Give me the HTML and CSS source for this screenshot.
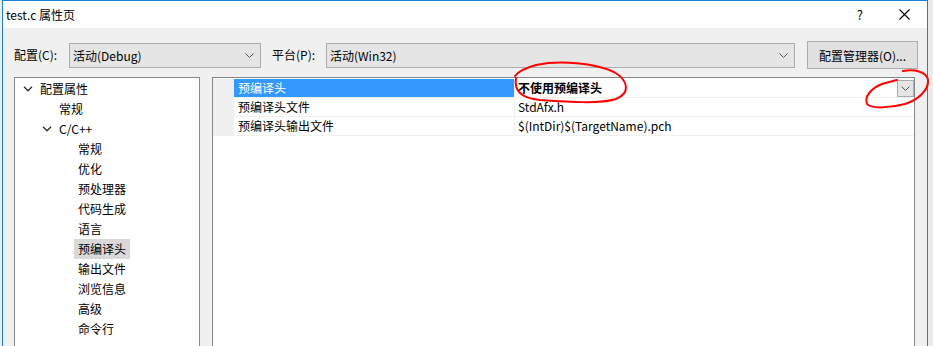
FILE: index.html
```html
<!DOCTYPE html>
<html lang="zh-CN">
<head>
  <meta charset="UTF-8" />
  <meta name="viewport" content="width=device-width, initial-scale=1.0"/>
  <title>test.c 属性页</title>
  <link rel="stylesheet" href="styles.css">
</head>
<body>
  <div class="window">
    <div class="titlebar">
      <span class="title">test.c 属性页</span>
      <span class="help">?</span>
      <svg class="close" width="11" height="11" viewBox="0 0 11 11"><path d="M0.5 0.5 L10.5 10.5 M10.5 0.5 L0.5 10.5" stroke="#000" stroke-width="1.1" fill="none"/></svg>
    </div>

    <div class="content">
      <div class="toolbar">
        <label class="lbl lbl-config">配置(C):</label>
        <div class="combo combo-config">
          <span>活动(Debug)</span>
          <svg width="9" height="6" viewBox="0 0 9 6"><polyline points="0.5,0.5 4.5,4.5 8.5,0.5" stroke="#555" fill="none"/></svg>
        </div>
        <label class="lbl lbl-platform">平台(P):</label>
        <div class="combo combo-platform">
          <span>活动(Win32)</span>
          <svg width="9" height="6" viewBox="0 0 9 6"><polyline points="0.5,0.5 4.5,4.5 8.5,0.5" stroke="#555" fill="none"/></svg>
        </div>
        <button class="btn">配置管理器(O)...</button>
      </div>

      <div class="panels">
        <div class="tree">
          <div class="node lvl0"><span class="toggle"><svg width="10" height="6" viewBox="0 0 10 6"><polyline points="1,0.8 5,4.8 9,0.8" stroke="#333" stroke-width="1.4" fill="none"/></svg></span><span class="text">配置属性</span></div>
          <div class="node lvl1"><span class="toggle"></span><span class="text">常规</span></div>
          <div class="node lvl1"><span class="toggle"><svg width="10" height="6" viewBox="0 0 10 6"><polyline points="1,0.8 5,4.8 9,0.8" stroke="#333" stroke-width="1.4" fill="none"/></svg></span><span class="text">C/C++</span></div>
          <div class="node lvl2"><span class="toggle"></span><span class="text">常规</span></div>
          <div class="node lvl2"><span class="toggle"></span><span class="text">优化</span></div>
          <div class="node lvl2"><span class="toggle"></span><span class="text">预处理器</span></div>
          <div class="node lvl2"><span class="toggle"></span><span class="text">代码生成</span></div>
          <div class="node lvl2"><span class="toggle"></span><span class="text">语言</span></div>
          <div class="node lvl2 selected"><span class="toggle"></span><span class="text">预编译头</span></div>
          <div class="node lvl2"><span class="toggle"></span><span class="text">输出文件</span></div>
          <div class="node lvl2"><span class="toggle"></span><span class="text">浏览信息</span></div>
          <div class="node lvl2"><span class="toggle"></span><span class="text">高级</span></div>
          <div class="node lvl2"><span class="toggle"></span><span class="text">命令行</span></div>
        </div>

        <div class="grid">
          <div class="prop active">
            <div class="gutter"></div>
            <div class="name">预编译头</div>
            <div class="value">
              <strong>不使用预编译头</strong>
              <span class="drop"><svg width="9" height="6" viewBox="0 0 9 6"><polyline points="0.5,0.5 4.5,4.5 8.5,0.5" stroke="#555" fill="none"/></svg></span>
            </div>
          </div>
          <div class="prop">
            <div class="gutter"></div>
            <div class="name">预编译头文件</div>
            <div class="value">StdAfx.h</div>
          </div>
          <div class="prop">
            <div class="gutter"></div>
            <div class="name">预编译头输出文件</div>
            <div class="value">$(IntDir)$(TargetName).pch</div>
          </div>
        </div>
      </div>
    </div>
  </div>

  <!-- hand drawn marks -->
  <svg class="marks" width="933" height="346" viewBox="0 0 933 346">
    <path d="M516 78 C 514 90, 520 98, 540 100 C 570 102, 600 104, 616 99 C 631 93, 628 80, 614 72 C 595 63, 560 60, 536 65 C 525 68, 518 72, 515 76" stroke="#f00" stroke-width="2" fill="none" stroke-linecap="round"/>
    <path d="M903 71 C 915 69, 927 72, 928 80 C 929 90, 918 100, 905 104 C 890 108, 871 109, 867 104 C 864 96, 872 88, 882 84 C 888 82, 893 81, 897 80" stroke="#f00" stroke-width="2" fill="none" stroke-linecap="round"/>
  </svg>
</body>
</html>
```

FILE: styles.css
```css
body {
  margin: 0;
  background: #ececec;
  font-family: "Noto Sans CJK SC", "Noto Sans", sans-serif;
  font-size: 12px;
  color: #000;
  position: relative;
  overflow: hidden;
  width: 933px;
  height: 346px;
}
.window {
  margin-left: 2px;
  width: 924px;
  height: 360px;
  border: 1px solid #1883d7;
  border-bottom: none;
  background: #f0f0f0;
  overflow: hidden;
}
.titlebar {
  height: 27px;
  background: #fff;
  display: flex;
  align-items: center;
  padding-left: 3px;
}
.title {
  flex: 1;
}
.help {
  margin-right: 36px;
  font-size: 13px;
}
.close {
  margin-right: 17px;
}
.toolbar {
  display: flex;
  align-items: flex-start;
  margin-top: 13px;
  padding-left: 11px;
  height: 28px;
}
.lbl {
  line-height: 28px;
  white-space: nowrap;
}
.lbl-config {
  width: 55px;
}
.lbl-platform {
  width: 54px;
  margin-left: 11px;
}
.combo {
  box-sizing: border-box;
  height: 25px;
  margin-top: 2px;
  background: #e5e5e5;
  border: 1px solid #acacac;
  display: flex;
  align-items: center;
  justify-content: space-between;
  padding: 0 6px 0 3px;
}
.combo-config {
  width: 192px;
}
.combo-platform {
  width: 469px;
}
.btn {
  box-sizing: border-box;
  width: 111px;
  height: 28px;
  margin-left: 12px;
  background: #e1e1e1;
  border: 1px solid #adadad;
  font-family: inherit;
  font-size: 12px;
  color: #000;
  padding: 0;
}
.panels {
  display: flex;
  margin-top: 8px;
  padding-left: 11px;
}
.tree {
  box-sizing: border-box;
  width: 186px;
  height: 280px;
  background: #fff;
  border: 1px solid #828790;
  padding-top: 1px;
}
.node {
  display: flex;
  align-items: center;
  height: 20px;
  line-height: 20px;
  white-space: nowrap;
}
.lvl0 { padding-left: 8px; }
.lvl1 { padding-left: 27px; }
.lvl2 { padding-left: 46px; }
.toggle {
  width: 17px;
  display: flex;
  align-items: center;
}
.node.selected .text {
  background: #d9d9d9;
  margin-left: -4px;
  padding: 0 4px;
}
.grid {
  box-sizing: border-box;
  width: 703px;
  height: 280px;
  margin-left: 12px;
  background: #fff;
  border: 1px solid #828790;
  padding-top: 1px;
}
.prop {
  display: grid;
  grid-template-columns: 21px 281px 1fr;
  height: 19px;
}
.gutter {
  background: #f0f0f0;
}
.name, .value {
  box-sizing: border-box;
  border-bottom: 1px solid #f0f0f0;
  line-height: 18px;
  white-space: nowrap;
}
.name {
  border-right: 1px solid #f0f0f0;
  padding-left: 4px;
}
.value {
  padding-left: 3px;
  display: flex;
  justify-content: space-between;
}
.prop.active .name {
  background: #3399ff;
  color: #fff;
}
.drop {
  box-sizing: border-box;
  width: 17px;
  height: 17px;
  margin-top: 1px;
  background: #e5e5e5;
  border: 1px solid #acacac;
  display: flex;
  align-items: center;
  justify-content: center;
}
.marks {
  position: absolute;
  top: 0;
  left: 0;
  pointer-events: none;
}
```
